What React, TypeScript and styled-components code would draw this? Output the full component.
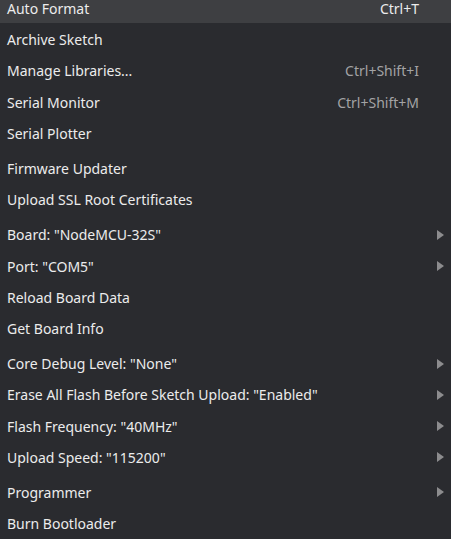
import styled, { createGlobalStyle } from 'styled-components';

const GlobalStyle = createGlobalStyle`
  html, body {
    margin: 0;
    padding: 0;
    background: #2a2b2f;
    overflow: hidden;
  }
`;

const Menu = styled.div`
  display: flex;
  flex-direction: column;
  gap: 2px;
  width: 451px;
  height: 539px;
  margin-top: -6px;
  background: #2a2b2f;
  font-family: 'Noto Sans', 'Open Sans', sans-serif;
  font-size: 14px;
  color: #ececec;
`;

const Row = styled.div<{ $active?: boolean }>`
  display: flex;
  align-items: center;
  flex: 0 0 29.2px;
  padding: 0 32px 0 7px;
  background: ${(p) => (p.$active ? '#3e3f42' : 'transparent')};
`;

const Label = styled.span`
  flex: 1;
  white-space: nowrap;
`;

const Shortcut = styled.span<{ $active?: boolean }>`
  color: ${(p) => (p.$active ? '#ececec' : '#a3a3a5')};
  white-space: nowrap;
`;

const Arrow = styled.span`
  width: 0;
  height: 0;
  margin-right: -25px;
  border-top: 5px solid transparent;
  border-bottom: 5px solid transparent;
  border-left: 7px solid #8c8c8e;
`;

const Separator = styled.div`
  flex: 0 0 2px;
`;

type Item = { label: string; shortcut?: string; sub?: boolean; active?: boolean } | 'sep';

const items: Item[] = [
  { label: 'Auto Format', shortcut: 'Ctrl+T', active: true },
  { label: 'Archive Sketch' },
  { label: 'Manage Libraries...', shortcut: 'Ctrl+Shift+I' },
  { label: 'Serial Monitor', shortcut: 'Ctrl+Shift+M' },
  { label: 'Serial Plotter' },
  'sep',
  { label: 'Firmware Updater' },
  { label: 'Upload SSL Root Certificates' },
  'sep',
  { label: 'Board: "NodeMCU-32S"', sub: true },
  { label: 'Port: "COM5"', sub: true },
  { label: 'Reload Board Data' },
  { label: 'Get Board Info' },
  'sep',
  { label: 'Core Debug Level: "None"', sub: true },
  { label: 'Erase All Flash Before Sketch Upload: "Enabled"', sub: true },
  { label: 'Flash Frequency: "40MHz"', sub: true },
  { label: 'Upload Speed: "115200"', sub: true },
  'sep',
  { label: 'Programmer', sub: true },
  { label: 'Burn Bootloader' },
];

export default function App(): JSX.Element {
  return (
    <>
      <GlobalStyle />
      <Menu>
        {items.map((item, i) =>
          item === 'sep' ? (
            <Separator key={i} />
          ) : (
            <Row key={i} $active={item.active}>
              <Label>{item.label}</Label>
              {item.shortcut && <Shortcut $active={item.active}>{item.shortcut}</Shortcut>}
              {item.sub && <Arrow />}
            </Row>
          ),
        )}
      </Menu>
    </>
  );
}
